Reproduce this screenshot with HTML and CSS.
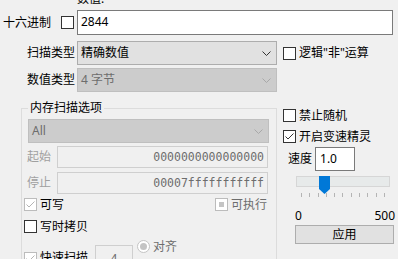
FILE: index.html
```html
<!DOCTYPE html>
<html lang="zh-CN">
<head>
<meta charset="utf-8">
<title>扫描设置</title>
<link rel="stylesheet" href="styles.css">
</head>
<body>
<div class="dlg">
  <div class="value-label">数值:</div>
  <div class="row row-hex">
    <span class="hex-lbl">十六进制</span>
    <span class="cb"></span>
    <div class="edit value-edit">2844</div>
  </div>
  <div class="row row-scan">
    <span class="field-lbl">扫描类型</span>
    <div class="combo"><span class="combo-text">精确数值</span><svg class="chev" width="9" height="5" viewBox="0 0 9 5"><polyline points="0.5,0.5 4.5,4.5 8.5,0.5" fill="none" stroke="#333" stroke-width="1"/></svg></div>
    <span class="cb not-cb"></span><span class="cb-lbl">逻辑"非"运算</span>
  </div>
  <div class="row row-type">
    <span class="field-lbl">数值类型</span>
    <div class="combo dis"><span class="combo-text">4 字节</span><svg class="chev" width="9" height="5" viewBox="0 0 9 5"><polyline points="0.5,0.5 4.5,4.5 8.5,0.5" fill="none" stroke="#a8a8a8" stroke-width="1"/></svg></div>
  </div>
  <div class="lower">
    <fieldset class="group">
      <legend>内存扫描选项</legend>
      <div class="combo dis wide"><span class="combo-text">All</span><svg class="chev" width="9" height="5" viewBox="0 0 9 5"><polyline points="0.5,0.5 4.5,4.5 8.5,0.5" fill="none" stroke="#a8a8a8" stroke-width="1"/></svg></div>
      <div class="range-row first">
        <span class="range-lbl">起始</span>
        <div class="edit range-edit">0000000000000000</div>
      </div>
      <div class="range-row">
        <span class="range-lbl">停止</span>
        <div class="edit range-edit">00007fffffffffff</div>
      </div>
      <div class="chk-row chk-row1">
        <span class="cb dis checked"><svg width="11" height="11" viewBox="0 0 11 11"><polyline points="1.5,5.5 4,8 9.5,2.5" fill="none" stroke="#b4b4b4" stroke-width="1"/></svg></span>
        <span class="cb-lbl">可写</span>
        <span class="cb dis indet exec-cb"><span class="indet-fill"></span></span>
        <span class="cb-lbl gray exec-lbl">可执行</span>
      </div>
      <div class="chk-row chk-row2">
        <span class="cb"></span>
        <span class="cb-lbl">写时拷贝</span>
      </div>
      <div class="fast-row">
        <span class="cb dis checked fast-cb"><svg width="11" height="11" viewBox="0 0 11 11"><polyline points="1.5,5.5 4,8 9.5,2.5" fill="none" stroke="#b4b4b4" stroke-width="1"/></svg></span>
        <span class="cb-lbl fast-lbl">快速扫描</span>
        <div class="edit fast-edit">4</div>
        <div class="radio-col">
          <div class="radio-row"><span class="radio"><span class="radio-dot"></span></span><span class="cb-lbl gray">对齐</span></div>
        </div>
      </div>
    </fieldset>
    <div class="side">
      <div class="side-chk first"><span class="cb"></span><span class="cb-lbl">禁止随机</span></div>
      <div class="side-chk second"><span class="cb checked"><svg width="11" height="11" viewBox="0 0 11 11"><polyline points="1.5,5.5 4,8 9.5,2.5" fill="none" stroke="#333" stroke-width="1"/></svg></span><span class="cb-lbl">开启变速精灵</span></div>
      <div class="speed-row">
        <span class="speed-lbl">速度</span>
        <div class="edit speed-edit">1.0</div>
      </div>
      <div class="slider">
        <div class="track"></div>
        <svg class="thumb" width="11" height="18" viewBox="0 0 11 18"><path d="M0 0H11V13L5.5 18L0 13Z" fill="#0078d7"/></svg>
        <div class="ticks"><i></i><i></i><i></i><i></i><i></i><i></i><i></i><i></i><i></i><i></i><i></i></div>
      </div>
      <div class="scale"><span>0</span><span>500</span></div>
      <div class="btn">应用</div>
    </div>
  </div>
</div>
</body>
</html>
```
FILE: styles.css
```css
html, body {
  margin: 0;
  padding: 0;
}
body {
  background: #f0f0f0;
  width: 398px;
  height: 259px;
  overflow: hidden;
  font-family: "Noto Sans", "Noto Sans CJK SC", sans-serif;
  font-size: 12px;
  line-height: 16px;
  color: #000;
}
.dlg {
  padding-top: 1px;
}
.value-label {
  margin-top: -10px;
  margin-left: 77px;
  height: 16px;
}
.row {
  display: flex;
  align-items: center;
}
.row-hex {
  margin-top: 3px;
  height: 25px;
}
.hex-lbl {
  margin-left: 3px;
  width: 58px;
}
.cb {
  box-sizing: border-box;
  width: 13px;
  height: 13px;
  border: 1px solid #333;
  background: #fff;
  flex: none;
  display: flex;
  align-items: center;
  justify-content: center;
}
.cb svg {
  display: block;
}
.cb.dis {
  border-color: #bcbcbc;
}
.cb-lbl {
  margin-left: 3px;
  white-space: nowrap;
}
.gray {
  color: #6d6d6d;
}
.row-hex .cb {
  margin-right: 3px;
}
.edit {
  box-sizing: border-box;
  border: 1px solid #7a7a7a;
  background: #fff;
}
.value-edit {
  width: 316px;
  height: 25px;
  padding-left: 3px;
  line-height: 22px;
}
.row-scan {
  margin-top: 6px;
  height: 24px;
}
.row-type {
  margin-top: 3px;
  height: 24px;
}
.field-lbl {
  box-sizing: border-box;
  width: 77px;
  padding-right: 2px;
  text-align: right;
}
.combo {
  box-sizing: border-box;
  width: 200px;
  height: 24px;
  border: 1px solid #adadad;
  background: #e1e1e1;
  display: flex;
  align-items: center;
  padding-left: 3px;
  padding-right: 5px;
}
.combo-text {
  flex: 1;
}
.combo.dis {
  background: #cccccc;
  border-color: #bfbfbf;
  color: #6d6d6d;
}
.not-cb {
  margin-left: 6px;
}
.lower {
  display: flex;
  align-items: flex-start;
  margin-top: 8px;
}
.group {
  box-sizing: border-box;
  margin: 0 0 0 21px;
  width: 256px;
  height: 220px;
  min-width: 0;
  border: 1px solid #dcdcdc;
  padding: 3px 7px 0 6px;
  flex: none;
}
.group legend {
  padding: 0 2px;
  margin-left: 0;
  line-height: 16px;
}
.combo.wide {
  width: 241px;
}
.range-row {
  display: flex;
  align-items: center;
  height: 22px;
  margin-top: 4px;
}
.range-row.first {
  margin-top: 3px;
}
.range-lbl {
  margin-left: -1px;
  width: 30px;
  color: #a0a0a0;
}
.range-edit {
  width: 211px;
  height: 22px;
  border-color: #cfcfcf;
  background: #f0f0f0;
  text-align: right;
  padding-right: 3px;
  font-family: "DejaVu Sans Mono", monospace;
  font-size: 11.5px;
  line-height: 20px;
  color: #6d6d6d;
}
.chk-row {
  display: flex;
  align-items: center;
  height: 13px;
  margin-left: -4px;
}
.chk-row1 {
  margin-top: 4px;
}
.chk-row2 {
  margin-top: 9px;
}
.exec-cb {
  margin-left: auto;
}
.exec-lbl {
  margin-right: 2px;
}
.indet-fill {
  width: 5px;
  height: 5px;
  background: #c4c4c4;
}
.fast-row {
  display: flex;
  align-items: flex-start;
  margin-top: 7px;
  margin-left: -4px;
}
.fast-cb {
  margin-top: 12px;
}
.fast-lbl {
  margin-top: 10px;
}
.fast-edit {
  margin-left: 7px;
  margin-top: 5px;
  width: 38px;
  height: 22px;
  border-color: #cfcfcf;
  background: #f0f0f0;
  text-align: center;
  color: #6d6d6d;
  line-height: 26px;
}
.radio-col {
  margin-left: 4px;
}
.radio-row {
  display: flex;
  align-items: center;
  height: 13px;
}
.radio {
  box-sizing: border-box;
  width: 13px;
  height: 13px;
  border-radius: 50%;
  border: 1px solid #c4c4c4;
  background: #fff;
  display: flex;
  align-items: center;
  justify-content: center;
}
.radio-dot {
  width: 7px;
  height: 7px;
  border-radius: 50%;
  background: #c4c4c4;
}
.side {
  margin-left: 6px;
  width: 115px;
}
.side-chk {
  display: flex;
  align-items: center;
  height: 13px;
}
.side-chk.first {
  margin-top: 9px;
}
.side-chk.second {
  margin-top: 8px;
}
.speed-row {
  display: flex;
  align-items: center;
  margin-top: 4px;
  height: 24px;
}
.speed-lbl {
  margin-left: 5px;
}
.speed-edit {
  margin-left: 3px;
  width: 40px;
  height: 24px;
  padding-left: 4px;
  line-height: 22px;
}
.slider {
  position: relative;
  margin-top: 5px;
  margin-left: 13px;
  width: 94px;
  height: 23px;
}
.track {
  box-sizing: border-box;
  margin-top: 2px;
  height: 11px;
  border: 1px solid #d6d6d6;
  background: #e7eaea;
}
.thumb {
  position: absolute;
  left: 23px;
  top: 0;
  display: block;
}
.ticks {
  display: flex;
  justify-content: space-between;
  padding: 0 5px;
  margin-top: 6px;
  height: 4px;
}
.ticks i {
  display: block;
  width: 1px;
  height: 4px;
  background: #b4b4b4;
}
.scale {
  display: flex;
  justify-content: space-between;
  margin-top: 9px;
  margin-left: 12px;
  width: 100px;
  height: 16px;
}
.btn {
  box-sizing: border-box;
  margin-top: 1px;
  margin-left: 12px;
  width: 99px;
  height: 19px;
  border: 1px solid #adadad;
  background: #e1e1e1;
  text-align: center;
  line-height: 17px;
}
```
